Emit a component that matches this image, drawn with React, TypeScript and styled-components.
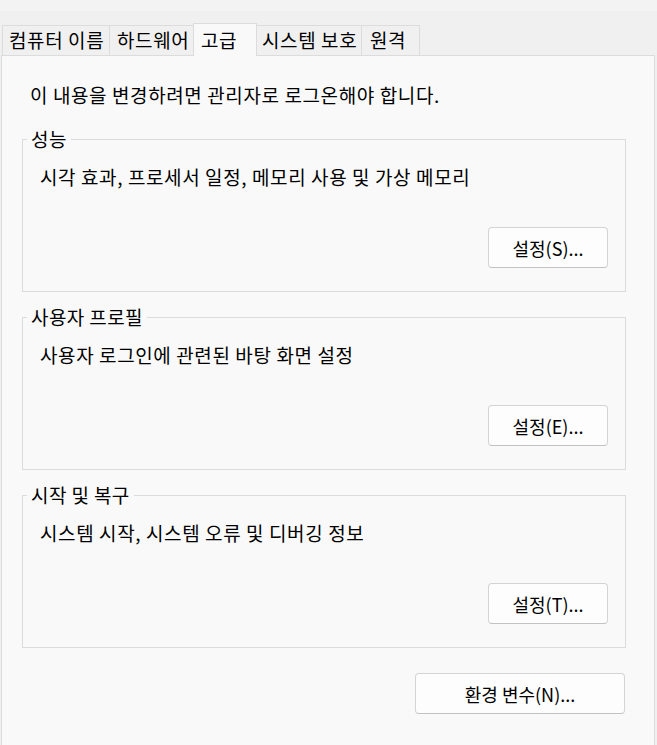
import styled, { createGlobalStyle } from "styled-components";

const GlobalStyle = createGlobalStyle`
  html, body {
    margin: 0;
    padding: 0;
    background: #f0f0f0;
  }
  body {
    font-family: "Noto Sans CJK KR", "Noto Sans", sans-serif;
    color: #000;
  }
`;

const Window = styled.div`
  width: 657px;
  height: 745px;
  display: flex;
  flex-direction: column;
  background: #f0f0f0;
  overflow: hidden;
`;

const TopStrip = styled.div`
  height: 11px;
  flex-shrink: 0;
  background: #f3f3f3;
`;

const TabStrip = styled.div`
  display: flex;
  align-items: flex-end;
  height: 45px;
  padding-left: 2px;
  flex-shrink: 0;
  position: relative;
  z-index: 1;
  margin-bottom: -1px;
`;

const Tab = styled.div<{ $width: number; $pad: number; $active?: boolean }>`
  box-sizing: border-box;
  width: ${(p) => p.$width}px;
  height: ${(p) => (p.$active ? 33 : 31)}px;
  padding-left: ${(p) => p.$pad}px;
  padding-top: ${(p) => (p.$active ? 2 : 0)}px;
  margin-left: -1px;
  font-size: 19px;
  letter-spacing: 0.6px;
  line-height: 28px;
  white-space: nowrap;
  background: ${(p) => (p.$active ? "#f9f9f9" : "#f0f0f0")};
  border: 1px solid #dcdcdc;
  border-bottom: ${(p) => (p.$active ? "none" : "1px solid #dcdcdc")};
  &:first-child {
    margin-left: 0;
  }
`;

const Panel = styled.div`
  flex: 1;
  margin-left: 1px;
  width: 654px;
  box-sizing: border-box;
  background: #f9f9f9;
  border: 1px solid #dcdcdc;
  border-bottom: none;
  padding: 27px 28px 0 20px;
  display: flex;
  flex-direction: column;
`;

const Notice = styled.p`
  margin: 0 0 20px 8px;
  font-size: 19px;
  letter-spacing: 0.6px;
  line-height: 24px;
`;

const Group = styled.fieldset`
  margin: 0 0 13px 0;
  padding: 0 17px 23px 17px;
  border: 1px solid #dcdcdc;
  display: flex;
  flex-direction: column;
  min-width: 0;
`;

const GroupTitle = styled.legend`
  margin-left: -13px;
  padding: 0 4px;
  font-size: 19px;
  letter-spacing: 0.4px;
  line-height: 24px;
`;

const Description = styled.div`
  margin-top: 14px;
  font-size: 19px;
  letter-spacing: 0.6px;
  line-height: 24px;
`;

const ButtonRow = styled.div`
  display: flex;
  justify-content: flex-end;
  margin-top: 38px;
`;

const Button = styled.button<{ $width: number }>`
  box-sizing: border-box;
  width: ${(p) => p.$width}px;
  height: 41px;
  background: #fdfdfd;
  border: 1px solid #d4d4d4;
  border-bottom-color: #c2c2c2;
  border-radius: 4px;
  font-family: "Noto Sans CJK KR", "Noto Sans", sans-serif;
  font-size: 18px;
  color: #000;
  padding: 0;
  line-height: 1;
`;

const Footer = styled.div`
  display: flex;
  justify-content: flex-end;
  margin-top: 12px;
  padding-right: 1px;
`;

const tabs = [
  { label: "컴퓨터 이름", width: 108, pad: 6 },
  { label: "하드웨어", width: 85, pad: 7 },
  { label: "고급", width: 64, pad: 7, active: true },
  { label: "시스템 보호", width: 106, pad: 5 },
  { label: "원격", width: 59, pad: 8 },
];

const groups = [
  { title: "성능", text: "시각 효과, 프로세서 일정, 메모리 사용 및 가상 메모리", button: "설정(S)..." },
  { title: "사용자 프로필", text: "사용자 로그인에 관련된 바탕 화면 설정", button: "설정(E)..." },
  { title: "시작 및 복구", text: "시스템 시작, 시스템 오류 및 디버깅 정보", button: "설정(T)..." },
];

export default function App() {
  return (
    <Window>
      <GlobalStyle />
      <TopStrip />
      <TabStrip>
        {tabs.map((t) => (
          <Tab key={t.label} $width={t.width} $pad={t.pad} $active={t.active}>
            {t.label}
          </Tab>
        ))}
      </TabStrip>
      <Panel>
        <Notice>이 내용을 변경하려면 관리자로 로그온해야 합니다.</Notice>
        {groups.map((g) => (
          <Group key={g.title}>
            <GroupTitle>{g.title}</GroupTitle>
            <Description>{g.text}</Description>
            <ButtonRow>
              <Button $width={120}>{g.button}</Button>
            </ButtonRow>
          </Group>
        ))}
        <Footer>
          <Button $width={210}>환경 변수(N)...</Button>
        </Footer>
      </Panel>
    </Window>
  );
}
